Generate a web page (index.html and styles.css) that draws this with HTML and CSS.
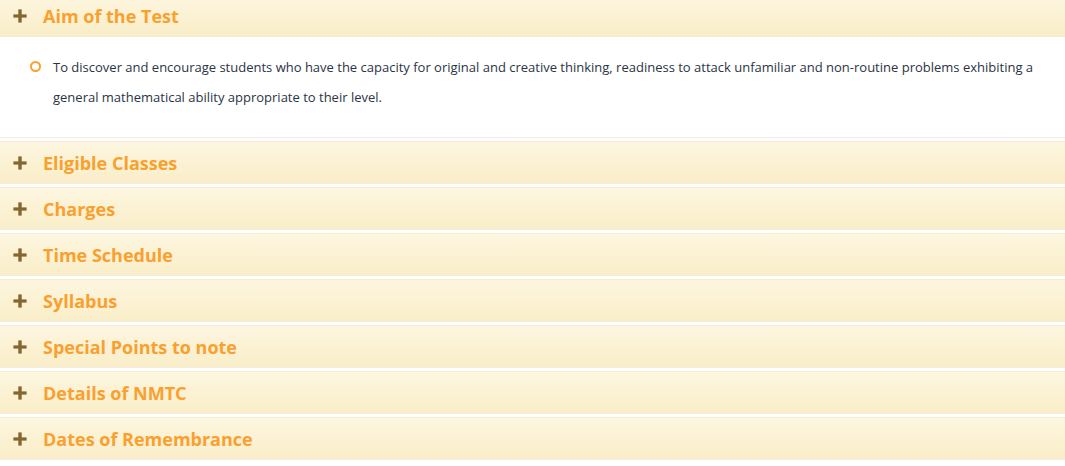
FILE: index.html
```html
<!DOCTYPE html>
<html>
<head>
<meta charset="utf-8">
<link rel="stylesheet" href="styles.css">
</head>
<body>
<div class="accordion">
  <div class="item open">
    <div class="head"><svg class="plus" viewBox="0 0 16 16"><path d="M8 1.5V14.5M1.5 8H14.5"/></svg><span class="title">Aim of the Test</span></div>
    <div class="body">
      <ul class="list">
        <li>To discover and encourage students who have the capacity for original and creative thinking, readiness to attack unfamiliar and non-routine problems exhibiting a general mathematical ability appropriate to their level.</li>
      </ul>
    </div>
  </div>
  <div class="item"><div class="head"><svg class="plus" viewBox="0 0 16 16"><path d="M8 1.5V14.5M1.5 8H14.5"/></svg><span class="title">Eligible Classes</span></div></div>
  <div class="item"><div class="head"><svg class="plus" viewBox="0 0 16 16"><path d="M8 1.5V14.5M1.5 8H14.5"/></svg><span class="title">Charges</span></div></div>
  <div class="item"><div class="head"><svg class="plus" viewBox="0 0 16 16"><path d="M8 1.5V14.5M1.5 8H14.5"/></svg><span class="title">Time Schedule</span></div></div>
  <div class="item"><div class="head"><svg class="plus" viewBox="0 0 16 16"><path d="M8 1.5V14.5M1.5 8H14.5"/></svg><span class="title">Syllabus</span></div></div>
  <div class="item"><div class="head"><svg class="plus" viewBox="0 0 16 16"><path d="M8 1.5V14.5M1.5 8H14.5"/></svg><span class="title">Special Points to note</span></div></div>
  <div class="item"><div class="head"><svg class="plus" viewBox="0 0 16 16"><path d="M8 1.5V14.5M1.5 8H14.5"/></svg><span class="title">Details of NMTC</span></div></div>
  <div class="item"><div class="head"><svg class="plus" viewBox="0 0 16 16"><path d="M8 1.5V14.5M1.5 8H14.5"/></svg><span class="title">Dates of Remembrance</span></div></div>
</div>
</body>
</html>
```
FILE: styles.css
```css
html, body {
  margin: 0;
  padding: 0;
  background: #ffffff;
  font-family: "Open Sans", "Noto Sans", sans-serif;
}
.accordion {
  margin-top: -6px;
  display: flex;
  flex-direction: column;
  gap: 3px;
}
.item {
  border-bottom: 1px solid #f3ece0;
}
.head {
  display: flex;
  align-items: center;
  background: linear-gradient(#fdf6e0, #faeec8);
  border-top: 1px solid #f6ead0;
  box-sizing: border-box;
  height: 42px;
  padding-left: 12px;
}
.plus {
  width: 16px;
  height: 16px;
  fill: none;
  stroke: #86662f;
  stroke-width: 3.2;
  filter: drop-shadow(0.5px 0.5px 0 rgba(80, 60, 30, 0.35));
}
.title {
  margin-left: 15px;
  font-size: 18px;
  font-weight: 700;
  color: #f9a02f;
}
.body {
  background: #ffffff;
  padding: 15px 20px 25px 0;
  border-top: 1px solid #f6ead0;
}
.list {
  margin: 0;
  padding: 0 0 0 53px;
  list-style: none;
}
.list li {
  position: relative;
  font-size: 13px;
  line-height: 30px;
  color: #2b3445;
}
.list li::before {
  content: "";
  position: absolute;
  left: -23px;
  top: 9px;
  width: 7px;
  height: 7px;
  border: 2px solid #f9a02f;
  border-radius: 50%;
}
```
